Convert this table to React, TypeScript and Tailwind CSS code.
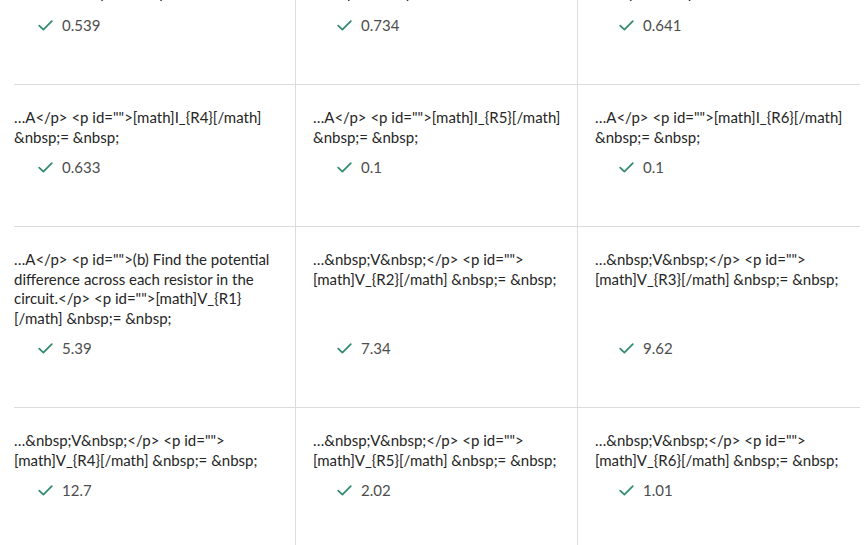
import React from "react";

type Cell = { text: string; answer: string };

const rows: Cell[][] = [
  [
    { text: "…A</p> <p id=\"\">(a) Find the current in each resistor.</p> <p id=\"\">[math]I_{R1}[/math] &nbsp;= &nbsp;", answer: "0.539" },
    { text: "…A</p> <p id=\"\">[math]I_{R2}[/math] &nbsp;= &nbsp;", answer: "0.734" },
    { text: "…A</p> <p id=\"\">[math]I_{R3}[/math] &nbsp;= &nbsp;", answer: "0.641" },
  ],
  [
    { text: "…A</p> <p id=\"\">[math]I_{R4}[/math] &nbsp;= &nbsp;", answer: "0.633" },
    { text: "…A</p> <p id=\"\">[math]I_{R5}[/math] &nbsp;= &nbsp;", answer: "0.1" },
    { text: "…A</p> <p id=\"\">[math]I_{R6}[/math] &nbsp;= &nbsp;", answer: "0.1" },
  ],
  [
    { text: "…A</p> <p id=\"\">(b) Find the potential difference across each resistor in the circuit.</p> <p id=\"\">[math]V_{R1}[/math] &nbsp;= &nbsp;", answer: "5.39" },
    { text: "…&nbsp;V&nbsp;</p> <p id=\"\">[math]V_{R2}[/math] &nbsp;= &nbsp;", answer: "7.34" },
    { text: "…&nbsp;V&nbsp;</p> <p id=\"\">[math]V_{R3}[/math] &nbsp;= &nbsp;", answer: "9.62" },
  ],
  [
    { text: "…&nbsp;V&nbsp;</p> <p id=\"\">[math]V_{R4}[/math] &nbsp;= &nbsp;", answer: "12.7" },
    { text: "…&nbsp;V&nbsp;</p> <p id=\"\">[math]V_{R5}[/math] &nbsp;= &nbsp;", answer: "2.02" },
    { text: "…&nbsp;V&nbsp;</p> <p id=\"\">[math]V_{R6}[/math] &nbsp;= &nbsp;", answer: "1.01" },
  ],
];

function CheckIcon() {
  return (
    <svg width="15" height="11" viewBox="0 0 15 11" fill="none" className="shrink-0">
      <path d="M1.2 5.6 L5.4 9.6 L13.8 1.2" stroke="#2f8a6c" strokeWidth="1.7" strokeLinecap="round" strokeLinejoin="round" />
    </svg>
  );
}

function GridCell({ cell, col, first }: { cell: Cell; col: number; first: boolean }) {
  const pad = col === 0 ? "pl-0 pr-[14px]" : "pl-[17px] pr-[14px] border-l border-[#dcdcdc]";
  const height = first ? "h-[85px] justify-end" : "";
  const answerTop = first ? "pt-[13px] h-[33px]" : "pt-[10px] h-[30px]";
  return (
    <div className={`flex flex-col border-b border-[#dcdcdc] pt-[23px] pb-[49px] ${pad} ${height}`}>
      <div className="text-[15px] leading-[19.5px] text-[#262626] break-words">{cell.text}</div>
      <div className={`mt-auto flex items-center pl-[24px] gap-[9px] ${answerTop}`}>
        <CheckIcon />
        <span className="text-[15px] leading-[20px] text-[#4d4d4d]">{cell.answer}</span>
      </div>
    </div>
  );
}

export default function App() {
  return (
    <div
      className="w-[866px] h-[545px] overflow-hidden bg-white pl-[14px]"
      style={{ fontFamily: "Lato, 'Noto Sans', sans-serif" }}
    >
      <div className="grid grid-cols-[281px_282px_283px]">
        {rows.map((row, r) =>
          row.map((cell, c) => <GridCell key={`${r}-${c}`} cell={cell} col={c} first={r === 0} />)
        )}
      </div>
    </div>
  );
}
